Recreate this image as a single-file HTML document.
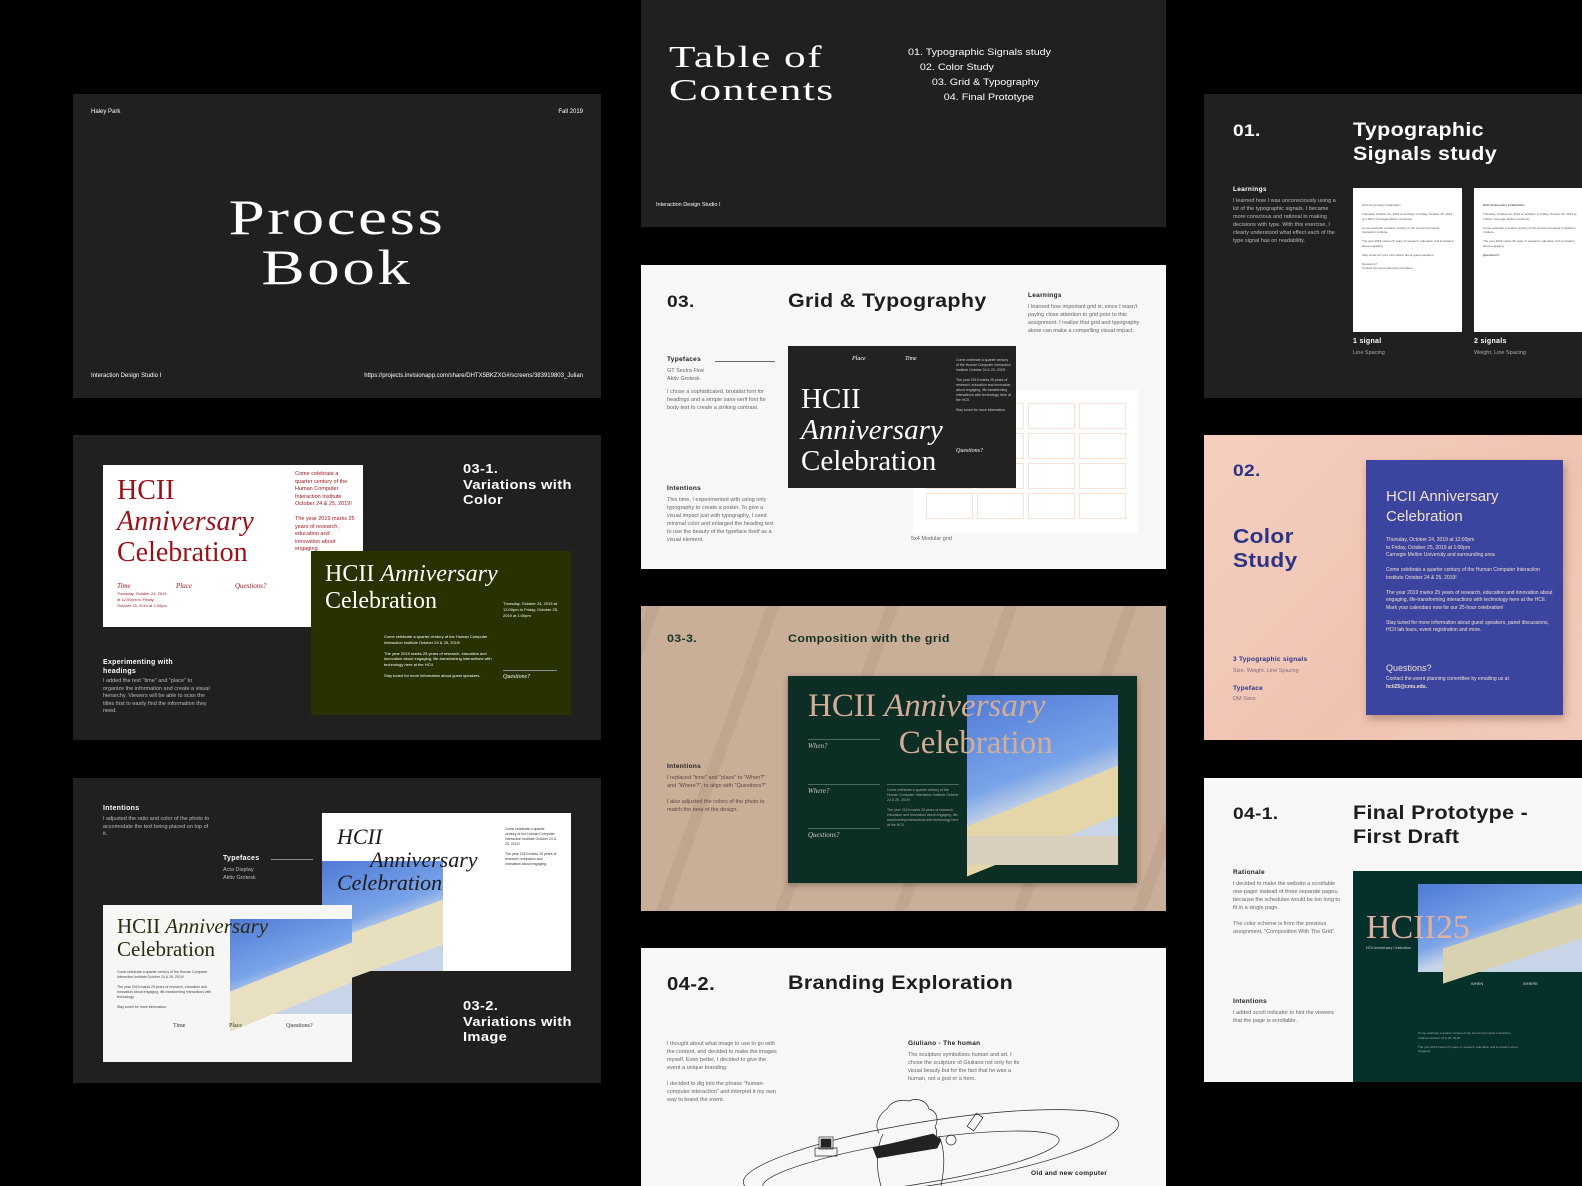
<!DOCTYPE html>
<html><head><meta charset="utf-8"><style>
*{margin:0;padding:0;box-sizing:border-box}
body{width:1582px;height:1186px;background:#000;position:relative;overflow:hidden;font-family:"Liberation Sans",sans-serif}
.a{position:absolute}
.s{position:absolute;overflow:hidden}
.dk{background:#221f1f;color:#fff}
.lt{background:#f8f7f5;color:#1d1d1d}
.h{font-weight:bold;letter-spacing:.3px}
.w{transform:scaleX(1.13);transform-origin:left top}
.t{font-size:5.5px;line-height:7.5px}
.b{font-size:5.5px;line-height:8px;color:#888}
.serif{font-family:"Liberation Serif",serif}
.sky{background:linear-gradient(160deg,#4f7ad6 0%,#7aa4e8 45%,#c8d4e8 60%)}
</style></head><body>

<!-- LEFT COLUMN -->
<div class="s dk" style="left:73px;top:94px;width:528px;height:304px">
 <div class="a" style="left:18px;top:15px;font-size:6px">Haley Park</div>
 <div class="a" style="right:18px;top:15px;font-size:6px">Fall 2019</div>
 <div class="a serif" style="left:0;width:528px;top:98px;text-align:center;font-size:50px;line-height:50px;letter-spacing:2px;transform:scaleX(1.3)">Process<br>Book</div>
 <div class="a" style="left:18px;top:279px;font-size:6px">Interaction Design Studio I</div>
 <div class="a" style="right:18px;top:279px;font-size:6px">https://projects.invisionapp.com/share/DHTX5BKZXG#/screens/383919803_Julian</div>
</div>

<div class="s dk" style="left:73px;top:435px;width:528px;height:305px">
 <div class="a" style="left:30px;top:30px;width:260px;height:162px;background:#fff;color:#9b1118">
  <div class="a serif" style="left:14px;top:10px;font-size:28px;line-height:31px">HCII<br><i>Anniversary</i><br>Celebration</div>
  <div class="a t" style="left:192px;top:6px;width:60px">Come celebrate a quarter century of the Human Computer Interaction Institute October 24 &amp; 25, 2019!<br><br>The year 2019 marks 25 years of research, education and innovation about engaging.</div>
  <div class="a serif" style="left:14px;top:117px;font-size:7px;font-style:italic">Time</div>
  <div class="a serif" style="left:73px;top:117px;font-size:7px;font-style:italic">Place</div>
  <div class="a serif" style="left:132px;top:117px;font-size:7px;font-style:italic">Questions?</div>
  <div class="a t" style="left:14px;top:126px;width:50px;font-size:4px;line-height:6px">Thursday, October 24, 2019 at 12:00pm to Friday, October 25, 2019 at 1:00pm</div>
 </div>
 <div class="a" style="left:238px;top:116px;width:260px;height:164px;background:#283100;color:#fff">
  <div class="a serif" style="left:14px;top:10px;font-size:24px;line-height:27px">HCII <i>Anniversary</i><br>Celebration</div>
  <div class="a t" style="left:192px;top:50px;width:56px;font-size:4px;line-height:6px">Thursday, October 24, 2019 at 12:00pm to Friday, October 25, 2019 at 1:00pm</div>
  <div class="a t" style="left:73px;top:83px;width:108px;font-size:4px;line-height:5.5px">Come celebrate a quarter century of the Human Computer Interaction Institute October 24 &amp; 25, 2019!<br><br>The year 2019 marks 25 years of research, education and innovation about engaging, life-transforming interactions with technology here at the HCII.<br><br>Stay tuned for more information about guest speakers.</div>
  <div class="a" style="left:192px;top:119px;width:54px;height:1px;background:#889"></div>
  <div class="a serif" style="left:192px;top:123px;font-size:6px;font-style:italic">Questions?</div>
 </div>
 <div class="a h w" style="left:390px;top:26px;font-size:13px;line-height:15.5px">03-1.<br>Variations with<br>Color</div>
 <div class="a h" style="left:30px;top:223px;font-size:7px;line-height:9px">Experimenting with<br>headings</div>
 <div class="a" style="left:30px;top:243px;width:110px;font-size:5.5px;line-height:7.5px;color:#bbb">I added the text "time" and "place" to organize the information and create a visual hierarchy. Viewers will be able to scan the titles first to easily find the information they need.</div>
</div>

<div class="s dk" style="left:73px;top:778px;width:528px;height:305px">
 <div class="a h" style="left:30px;top:27px;font-size:7px">Intentions</div>
 <div class="a" style="left:30px;top:38px;width:110px;font-size:5.5px;line-height:7.5px;color:#bbb">I adjusted the ratio and color of the photo to accomodate the text being placed on top of it.</div>
 <div class="a h" style="left:150px;top:77px;font-size:7px">Typefaces</div>
 <div class="a" style="left:198px;top:81px;width:42px;height:1px;background:#888"></div>
 <div class="a" style="left:150px;top:89px;font-size:5.5px;line-height:7.5px;color:#bbb">Acta Display<br>Aktiv Grotesk</div>
 <div class="a" style="left:249px;top:35px;width:249px;height:158px;background:#fff">
  <div class="a sky" style="left:0;top:48px;width:121px;height:110px"></div>
  <div class="a" style="left:20px;top:105px;width:101px;height:45px;background:#e8dfbf;transform:skewY(-20deg)"></div>
  <div class="a serif" style="left:15px;top:12px;font-size:22px;line-height:23px;font-style:italic;color:#1d1d1d">HCII<br>&nbsp;&nbsp;&nbsp;&nbsp;&nbsp;&nbsp;Anniversary<br>Celebration</div>
  <div class="a t" style="left:183px;top:14px;width:52px;font-size:3.5px;line-height:5px;color:#333">Come celebrate a quarter century of the Human Computer Interaction Institute October 24 &amp; 25, 2019!<br><br>The year 2019 marks 25 years of research, education and innovation about engaging.</div>
 </div>
 <div class="a" style="left:30px;top:127px;width:249px;height:157px;background:#f6f6f4">
  <div class="a sky" style="left:127px;top:14px;width:122px;height:95px"></div>
  <div class="a" style="left:127px;top:62px;width:122px;height:40px;background:#e9e0c2;transform:skewY(-22deg)"></div>
  <div class="a serif" style="left:14px;top:10px;font-size:21px;line-height:23px;color:#2a2b10">HCII <i>Anniversary</i><br>Celebration</div>
  <div class="a t" style="left:14px;top:65px;width:105px;font-size:3.5px;line-height:5px;color:#444">Come celebrate a quarter century of the Human Computer Interaction Institute October 24 &amp; 25, 2019!<br><br>The year 2019 marks 25 years of research, education and innovation about engaging, life-transforming interactions with technology.<br><br>Stay tuned for more information.</div>
  <div class="a serif" style="left:70px;top:118px;font-size:6px;color:#333">Time</div>
  <div class="a serif" style="left:126px;top:118px;font-size:6px;color:#333">Place</div>
  <div class="a serif" style="left:183px;top:118px;font-size:6px;color:#333">Questions?</div>
 </div>
 <div class="a h w" style="left:390px;top:220px;font-size:13px;line-height:15.5px">03-2.<br>Variations with<br>Image</div>
</div>

<!-- MIDDLE COLUMN -->
<div class="s dk" style="left:641px;top:0;width:525px;height:227px">
 <div class="a serif" style="left:28px;top:40px;font-size:31px;line-height:33px;letter-spacing:1px;transform:scaleX(1.4);transform-origin:left">Table of<br>Contents</div>
 <div class="a w" style="left:267px;top:45px;font-size:9.5px;line-height:15px">01. Typographic Signals study<br>&nbsp;&nbsp;&nbsp;&nbsp;02. Color Study<br>&nbsp;&nbsp;&nbsp;&nbsp;&nbsp;&nbsp;&nbsp;&nbsp;03. Grid &amp; Typography<br>&nbsp;&nbsp;&nbsp;&nbsp;&nbsp;&nbsp;&nbsp;&nbsp;&nbsp;&nbsp;&nbsp;&nbsp;04. Final Prototype</div>
 <div class="a" style="left:15px;top:202px;font-size:5.5px">Interaction Design Studio I</div>
</div>

<div class="s lt" style="left:641px;top:265px;width:525px;height:304px">
 <div class="a h w" style="left:26px;top:27px;font-size:17px">03.</div>
 <div class="a h w" style="left:147px;top:26px;font-size:19px">Grid &amp; Typography</div>
 <div class="a h" style="left:387px;top:27px;font-size:6.5px">Learnings</div>
 <div class="a b" style="left:387px;top:38px;width:112px;color:#666">I learned how important grid is, since I wasn't paying close attention to grid prior to this assignment. I realize that grid and typography alone can make a compelling visual impact.</div>
 <div class="a h" style="left:26px;top:91px;font-size:6.5px">Typefaces</div>
 <div class="a" style="left:74px;top:96px;width:60px;height:1px;background:#666"></div>
 <div class="a b" style="left:26px;top:102px;color:#666">GT Sectra Fine<br>Aktiv Grotesk</div>
 <div class="a b" style="left:26px;top:123px;width:105px;color:#666">I chose a sophisticated, brutalist font for headings and a simple sans-serif font for body text to create a striking contrast.</div>
 <div class="a h" style="left:26px;top:220px;font-size:6.5px">Intentions</div>
 <div class="a b" style="left:26px;top:231px;width:110px;color:#666">This time, I experimented with using only typography to create a poster. To give a visual impact just with typography, I used minimal color and enlarged the heading text to use the beauty of the typeface itself as a visual element.</div>
 <div class="a" style="left:272px;top:125px;width:225px;height:143px;background:#fff">
  <div style="display:grid;grid-template-columns:repeat(4,47px);gap:4px;padding:13px">
   <div style="height:26px;border:1px solid #f6e2d4"></div><div style="height:26px;border:1px solid #f6e2d4"></div><div style="height:26px;border:1px solid #f6e2d4"></div><div style="height:26px;border:1px solid #f6e2d4"></div>
   <div style="height:26px;border:1px solid #f6e2d4"></div><div style="height:26px;border:1px solid #f6e2d4"></div><div style="height:26px;border:1px solid #f6e2d4"></div><div style="height:26px;border:1px solid #f6e2d4"></div>
   <div style="height:26px;border:1px solid #f6e2d4"></div><div style="height:26px;border:1px solid #f6e2d4"></div><div style="height:26px;border:1px solid #f6e2d4"></div><div style="height:26px;border:1px solid #f6e2d4"></div>
   <div style="height:26px;border:1px solid #f6e2d4"></div><div style="height:26px;border:1px solid #f6e2d4"></div><div style="height:26px;border:1px solid #f6e2d4"></div><div style="height:26px;border:1px solid #f6e2d4"></div>
  </div>
 </div>
 <div class="a b" style="left:270px;top:270px;color:#666">5x4 Modular grid</div>
 <div class="a" style="left:147px;top:81px;width:228px;height:142px;background:#222;color:#fff">
  <div class="a serif" style="left:13px;top:38px;font-size:29px;line-height:31px">HCII<br><i>Anniversary</i><br>Celebration</div>
  <div class="a serif" style="left:64px;top:10px;font-size:6px;font-style:italic">Place</div>
  <div class="a serif" style="left:117px;top:10px;font-size:6px;font-style:italic">Time</div>
  <div class="a t" style="left:168px;top:12px;width:56px;font-size:3.5px;line-height:5px;color:#ccc">Come celebrate a quarter century of the Human Computer Interaction Institute October 24 &amp; 25, 2019!<br><br>The year 2019 marks 25 years of research, education and innovation about engaging, life-transforming interactions with technology here at the HCII.<br><br>Stay tuned for more information.</div>
  <div class="a serif" style="left:168px;top:102px;font-size:6px;font-style:italic">Questions?</div>
 </div>
</div>

<div class="s" style="left:641px;top:606px;width:525px;height:305px;background:#c9ae98">
 <div class="a" style="left:-100px;top:0;width:800px;height:305px;background:repeating-linear-gradient(110deg,transparent 0 100px,rgba(90,60,40,.08) 100px 112px)"></div>
 <div class="a h w" style="left:26px;top:27px;font-size:11px;color:#153127">03-3.</div>
 <div class="a h w" style="left:147px;top:27px;font-size:11px;color:#153127">Composition with the grid</div>
 <div class="a h" style="left:26px;top:157px;font-size:6.5px;color:#222">Intentions</div>
 <div class="a b" style="left:26px;top:168px;width:105px;color:#5a4a40">I replaced "time" and "place" to "When?" and "Where?", to align with "Questions?"<br><br>I also adjusted the colors of the photo to match the tone of the design.</div>
 <div class="a" style="left:147px;top:70px;width:349px;height:207px;background:#0d2e25;box-shadow:0 2px 6px rgba(0,0,0,.3)">
  <div class="a sky" style="left:179px;top:19px;width:151px;height:170px"></div>
  <div class="a" style="left:179px;top:120px;width:151px;height:50px;background:#e4d6a8;transform:skewY(-22deg)"></div>
  <div class="a" style="left:179px;top:160px;width:151px;height:29px;background:#d8d0bc"></div>
  <div class="a serif" style="left:20px;top:12px;font-size:33px;line-height:37px;color:#d4ad98">HCII <i>Anniversary</i><br>&nbsp;&nbsp;&nbsp;&nbsp;&nbsp;&nbsp;&nbsp;&nbsp;&nbsp;&nbsp;&nbsp;Celebration</div>
  <div class="a" style="left:20px;top:63px;width:72px;height:1px;background:#4a6a5f"></div>
  <div class="a serif" style="left:20px;top:66px;font-size:7px;font-style:italic;color:#ccc">When?</div>
  <div class="a" style="left:20px;top:108px;width:72px;height:1px;background:#4a6a5f"></div>
  <div class="a serif" style="left:20px;top:111px;font-size:7px;font-style:italic;color:#ccc">Where?</div>
  <div class="a" style="left:20px;top:152px;width:72px;height:1px;background:#4a6a5f"></div>
  <div class="a serif" style="left:20px;top:155px;font-size:7px;font-style:italic;color:#ccc">Questions?</div>
  <div class="a" style="left:99px;top:108px;width:72px;height:1px;background:#4a6a5f"></div>
  <div class="a t" style="left:99px;top:112px;width:72px;font-size:3.5px;line-height:5px;color:#aaa">Come celebrate a quarter century of the Human Computer Interaction Institute October 24 &amp; 25, 2019!<br><br>The year 2019 marks 25 years of research, education and innovation about engaging, life-transforming interactions with technology here at the HCII.</div>
 </div>
</div>

<div class="s lt" style="left:641px;top:948px;width:525px;height:238px">
 <div class="a h w" style="left:26px;top:26px;font-size:18px">04-2.</div>
 <div class="a h w" style="left:147px;top:25px;font-size:19px">Branding Exploration</div>
 <div class="a b" style="left:26px;top:92px;width:112px;color:#666">I thought about what image to use to go with the content, and decided to make the images myself. Even better, I decided to give the event a unique branding.<br><br>I decided to dig into the phrase "human-computer interaction" and interpret it my own way to brand the event.</div>
 <div class="a h" style="left:267px;top:92px;font-size:6.5px">Giuliano - The human</div>
 <div class="a b" style="left:267px;top:103px;width:112px;color:#666">The sculpture symbolizes human and art. I chose the sculpture of Giuliano not only for its visual beauty but for the fact that he was a human, not a god or a hero.</div>
 <svg class="a" style="left:0;top:0" width="525" height="238" fill="none" stroke="#222" stroke-width=".7">
  <ellipse cx="290" cy="205" rx="190" ry="32" transform="rotate(-9 290 205)"/>
  <ellipse cx="270" cy="215" rx="150" ry="22" transform="rotate(-9 270 215)"/>
  <path d="M240 238c-6-20-4-40 2-52M300 238c4-20 4-36-2-50"/>
  <path d="M238 185c-6-10 2-20 8-24 4-8 14-10 22-8 8-4 18 0 20 8 8 2 10 10 6 18 4 6 0 14-4 16"/>
  <path d="M232 200l60-14 8 6-4 8-60 10z" fill="#222"/>
  <rect x="178" y="189" width="14" height="12" fill="#fff"/><rect x="180" y="191" width="10" height="8" fill="#222"/>
  <path d="M174 200h22v8h-22z"/>
  <rect x="330" y="166" width="8" height="16" transform="rotate(35 334 174)"/>
  <circle cx="310" cy="192" r="5"/>
 </svg>
 <div class="a h" style="left:390px;top:222px;font-size:6.5px">Old and new computer</div>
</div>

<!-- RIGHT COLUMN -->
<div class="s dk" style="left:1204px;top:94px;width:378px;height:304px">
 <div class="a h w" style="left:29px;top:27px;font-size:17px">01.</div>
 <div class="a h w" style="left:149px;top:25px;font-size:19px;line-height:24px">Typographic<br>Signals study</div>
 <div class="a h" style="left:29px;top:92px;font-size:6.5px">Learnings</div>
 <div class="a b" style="left:29px;top:103px;width:108px;color:#bbb">I learned how I was unconsciously using a lot of the typographic signals. I became more conscious and rational in making decisions with type. With this exercise, I clearly understood what effect each of the type signal has on readability.</div>
 <div class="a" style="left:149px;top:94px;width:109px;height:144px;background:#fff"><div class="a t" style="left:9px;top:15px;width:92px;font-size:3px;line-height:4.5px;color:#555">HCII Anniversary Celebration<br><br>Thursday, October 24, 2019 at 12:00pm to Friday, October 25, 2019 at 1:00pm Carnegie Mellon University<br><br>Come celebrate a quarter century of the Human Computer Interaction Institute.<br><br>The year 2019 marks 25 years of research, education and innovation about engaging.<br><br>Stay tuned for more information about guest speakers.<br><br>Questions?<br>Contact the event planning committee.</div></div>
 <div class="a" style="left:270px;top:94px;width:110px;height:144px;background:#fff"><div class="a t" style="left:9px;top:15px;width:98px;font-size:3px;line-height:4.5px;color:#555"><b>HCII Anniversary Celebration</b><br><br>Thursday, October 24, 2019 at 12:00pm to Friday, October 25, 2019 at 1:00pm Carnegie Mellon University<br><br>Come celebrate a quarter century of the Human Computer Interaction Institute.<br><br>The year 2019 marks 25 years of research, education and innovation about engaging.<br><br><b>Questions?</b></div></div>
 <div class="a h" style="left:149px;top:244px;font-size:7px">1 signal</div>
 <div class="a b" style="left:149px;top:255px;color:#aaa">Line Spacing</div>
 <div class="a h" style="left:270px;top:244px;font-size:7px">2 signals</div>
 <div class="a b" style="left:270px;top:255px;color:#aaa">Weight, Line Spacing</div>
</div>

<div class="s" style="left:1204px;top:435px;width:378px;height:305px;background:linear-gradient(135deg,#f6cfbf,#efc3b2 60%,#f3cbbb)">
 <div class="a h w" style="left:29px;top:26px;font-size:17px;color:#2a3486">02.</div>
 <div class="a h w" style="left:29px;top:90px;font-size:20px;line-height:24px;color:#2a3486">Color<br>Study</div>
 <div class="a h" style="left:29px;top:221px;font-size:6.5px;color:#2a3486">3 Typographic signals</div>
 <div class="a b" style="left:29px;top:232px;color:#8a6a80">Size, Weight, Line Spacing</div>
 <div class="a h" style="left:29px;top:250px;font-size:6.5px;color:#2a3486">Typeface</div>
 <div class="a b" style="left:29px;top:260px;color:#8a6a80">DM Sans</div>
 <div class="a" style="left:162px;top:25px;width:197px;height:255px;background:#3b45a0;color:#f0e0d0;box-shadow:2px 4px 8px rgba(80,40,30,.35)">
  <div class="a" style="left:20px;top:27px;font-size:15px;line-height:20px">HCII Anniversary<br>Celebration</div>
  <div class="a" style="left:20px;top:77px;width:170px;font-size:5px;line-height:7.5px">Thursday, October 24, 2019 at 12:00pm<br>to Friday, October 25, 2019 at 1:00pm<br>Carnegie Mellon University and surrounding area<br><br>Come celebrate a quarter century of the Human Computer Interaction Institute October 24 &amp; 25, 2019!<br><br>The year 2019 marks 25 years of research, education and innovation about engaging, life-transforming interactions with technology here at the HCII. Mark your calendars now for our 25-hour celebration!<br><br>Stay tuned for more information about guest speakers, panel discussions, HCII lab tours, event registration and more.</div>
  <div class="a" style="left:20px;top:203px;font-size:9px">Questions?</div>
  <div class="a" style="left:20px;top:216px;width:165px;font-size:5px;line-height:7.5px">Contact the event planning committee by emailing us at <b>hcii25@cmu.edu.</b></div>
 </div>
</div>

<div class="s lt" style="left:1204px;top:778px;width:378px;height:304px">
 <div class="a h w" style="left:29px;top:26px;font-size:17px">04-1.</div>
 <div class="a h w" style="left:149px;top:24px;font-size:19px;line-height:24px">Final Prototype -<br>First Draft</div>
 <div class="a h" style="left:29px;top:91px;font-size:6.5px">Rationale</div>
 <div class="a b" style="left:29px;top:102px;width:108px;color:#666">I decided to make the website a scrollable one-pager instead of three separate pages, because the schedules would be too long to fit in a single page.<br><br>The color scheme is from the previous assignment, "Composition With The Grid".</div>
 <div class="a h" style="left:29px;top:220px;font-size:6.5px">Intentions</div>
 <div class="a b" style="left:29px;top:231px;width:108px;color:#666">I added scroll indicator to hint the viewers that the page is scrollable.</div>
 <div class="a" style="left:149px;top:93px;width:229px;height:211px;background:#06302a">
  <div class="a sky" style="left:65px;top:13px;width:164px;height:88px"></div>
  <div class="a" style="left:90px;top:55px;width:139px;height:35px;background:#d9d2b0;transform:skewY(-18deg)"></div>
  <div class="a serif" style="left:13px;top:38px;font-size:34px;color:#e0b0a0">HCII25</div>
  <div class="a" style="left:13px;top:75px;font-size:3.5px;color:#ccc">HCII Anniversary Celebration</div>
  <div class="a" style="left:118px;top:110px;font-size:4px;color:#ddd">WHEN</div>
  <div class="a" style="left:170px;top:110px;font-size:4px;color:#ddd">WHERE</div>
  <div class="a t" style="left:65px;top:160px;width:100px;font-size:3px;line-height:4.5px;color:#9ab">Come celebrate a quarter century of the Human Computer Interaction Institute October 24 &amp; 25, 2019!<br><br>The year 2019 marks 25 years of research, education and innovation about engaging.</div>
 </div>
</div>
</body></html>
